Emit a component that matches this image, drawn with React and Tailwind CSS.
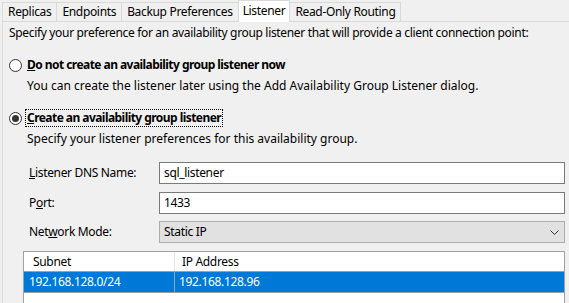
import React from 'react';

const tabs = ['Replicas', 'Endpoints', 'Backup Preferences', 'Listener', 'Read-Only Routing'];

function Radio({ checked }) {
  return (
    <span className="relative inline-flex h-[13px] w-[13px] shrink-0 items-center justify-center rounded-full border border-[#333] bg-white">
      {checked && <span className="h-[7px] w-[7px] rounded-full bg-[#333]" />}
    </span>
  );
}

function Field({ label, children }) {
  return (
    <div className="flex h-[22px] items-center">
      <div className="w-[130px] pl-[26px] box-content shrink-0">{label}</div>
      {children}
    </div>
  );
}

export default function App() {
  return (
    <div
      className="relative h-[303px] w-[569px] overflow-hidden bg-[#f0f0f0] text-[12px] leading-[16px] tracking-[-0.33px] text-black"
      style={{ fontFamily: '"Noto Sans", "Liberation Sans", sans-serif' }}
    >
      {/* tab strip */}
      <div className="flex h-[21px] items-end pl-[2px]">
        {tabs.map((t) => {
          const sel = t === 'Listener';
          return sel ? (
            <div
              key={t}
              className="relative z-10 -mb-px -ml-px flex h-[22px] items-start border border-b-0 border-[#d9d9d9] bg-white px-[4px] pt-[2px]"
            >
              {t}
            </div>
          ) : (
            <div
              key={t}
              className="-ml-px flex h-[19px] items-center border border-b-0 border-[#d9d9d9] bg-[#f0f0f0] px-[5px] first:ml-0"
            >
              {t}
            </div>
          );
        })}
      </div>

      {/* panel */}
      <div className="ml-[2px] h-[282px] border-l border-t border-[#d9d9d9] bg-[#f0f0f0]">
        <div className="mt-[3px] pl-[6px]">
          Specify your preference for an availability group listener that will provide a client connection point:
        </div>

        <div className="mt-[16px] flex items-center gap-[5px] pl-[6px]">
          <Radio />
          <span className="font-bold tracking-[-0.55px]">
            <span className="underline">D</span>o not create an availability group listener now
          </span>
        </div>
        <div className="mt-[5px] pl-[24px] tracking-normal">
          You can create the listener later using the Add Availability Group Listener dialog.
        </div>

        <div className="mt-[15px] flex items-center gap-[3px] pl-[6px]">
          <Radio checked />
          <span className="border border-dotted border-black px-[1px] font-bold leading-[16px] tracking-[-0.55px]">
            <span className="underline">C</span>reate an availability group listener
          </span>
        </div>
        <div className="mt-[4px] pl-[24px] tracking-normal">
          Specify your listener preferences for this availability group.
        </div>

        <div className="mt-[15px] flex flex-col gap-[8px] pr-[4px]">
          <Field
            label={
              <>
                <span className="underline">L</span>istener DNS Name:
              </>
            }
          >
            <div className="flex h-[22px] flex-1 items-center border border-[#7a7a7a] bg-white pl-[4px]">
              sql_listener
            </div>
          </Field>
          <Field
            label={
              <>
                P<span className="underline">o</span>rt:
              </>
            }
          >
            <div className="flex h-[22px] flex-1 items-center border border-[#7a7a7a] bg-white pl-[4px]">1433</div>
          </Field>
        </div>
        <div className="mt-[7px] pr-[4px]">
          <Field
            label={
              <>
                Net<span className="underline">w</span>ork Mode:
              </>
            }
          >
            <div className="flex h-[22px] flex-1 items-center justify-between border border-[#adadad] bg-[#e1e1e1] pl-[4px] pr-[5px]">
              <span>Static IP</span>
              <svg width="9" height="5" viewBox="0 0 9 5" className="mt-[1px]">
                <polyline points="0.5,0.5 4.5,4.5 8.5,0.5" fill="none" stroke="#333" strokeWidth="1" />
              </svg>
            </div>
          </Field>
        </div>

        {/* address grid */}
        <div className="ml-[20px] mr-[4px] mt-[8px] h-[60px] border border-[#a0a0a0] bg-white">
          <div className="flex h-[20px] items-center border-b border-[#a0a0a0]">
            <div className="flex h-full w-[151px] items-center border-r border-[#e5e5e5] pl-[9px]">Subnet</div>
            <div className="pl-[7px]">IP Address</div>
          </div>
          <div className="flex h-[21px] items-center border-b border-[#a0a0a0] bg-[#0078d7] text-white">
            <div className="flex h-full w-[151px] items-center border-r border-[#a0a0a0] pl-[5px]">192.168.128.0/24</div>
            <div className="pl-[4px]">192.168.128.96</div>
          </div>
        </div>
      </div>
    </div>
  );
}
